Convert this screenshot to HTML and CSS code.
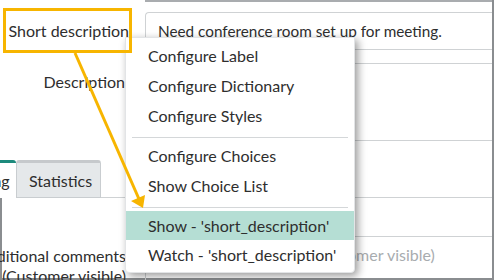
FILE: index.html
```html
<!DOCTYPE html>
<html lang="en">
<head>
    <meta charset="UTF-8">
    <title>Incident form - context menu</title>
    <link rel="stylesheet" href="styles.css">
</head>
<body>
    <div class="screen">
        <div class="form">
            <div class="form-row top-stub">
                <div class="label"></div>
                <div class="field stub"></div>
            </div>

            <div class="form-row row-short">
                <div class="label">Short description</div>
                <div class="field input">Need conference room set up for meeting.</div>
            </div>

            <div class="form-row row-desc">
                <div class="label">Description</div>
                <div class="field textarea"></div>
            </div>

            <div class="tabs">
                <div class="tab active">Billing</div>
                <div class="tab">Statistics</div>
                <div class="tab-fill"></div>
            </div>

            <div class="panel">
                <div class="form-row row-comments">
                    <div class="label label-stack">
                        <span>Additional comments</span>
                        <span>(Customer visible)</span>
                    </div>
                    <div class="field textarea placeholder">Additional comments (Customer visible)</div>
                </div>
            </div>
        </div>

        <ul class="context-menu">
            <li>Configure Label</li>
            <li>Configure Dictionary</li>
            <li>Configure Styles</li>
            <li class="sep"></li>
            <li>Configure Choices</li>
            <li>Show Choice List</li>
            <li class="sep"></li>
            <li class="hover">Show - 'short_description'</li>
            <li>Watch - 'short_description'</li>
        </ul>

        <svg class="callout" width="494" height="280" viewBox="0 0 494 280">
            <rect x="4.5" y="9.5" width="126" height="42" fill="none" stroke="#f7b500" stroke-width="3"/>
            <line x1="75" y1="53" x2="139" y2="199" stroke="#f7b500" stroke-width="3"/>
            <polygon points="143,208 131,201 145,195" fill="#f7b500"/>
        </svg>
    </div>
</body>
</html>
```

FILE: styles.css
```css
* {
    margin: 0;
    padding: 0;
    box-sizing: border-box;
}

body {
    font-family: Lato, 'Open Sans', sans-serif;
    color: #2e2e2e;
    background: #fff;
}

.screen {
    position: relative;
    width: 494px;
    height: 280px;
    overflow: hidden;
    border-right: 2px solid #8a8d90;
}

.form {
    display: flex;
    flex-direction: column;
}

.form-row {
    display: grid;
    grid-template-columns: 145px 1fr;
}

.label {
    font-size: 16px;
    text-align: right;
    padding-right: 20px;
    white-space: nowrap;
}

.field {
    border: 1px solid #cfd2d4;
    border-right: none;
}

.top-stub {
    height: 12px;
}

.stub {
    height: 2px;
    border: none;
    border-top: 2px solid #a9acaf;
}

.row-short {
    height: 38px;
}

.row-short .label {
    padding-right: 16px;
    padding-top: 9px;
}

.input {
    border-radius: 4px 0 0 4px;
    font-size: 15.3px;
    padding: 9px 12px;
    white-space: nowrap;
}

.row-desc {
    margin-top: 13px;
    height: 78px;
}

.row-desc .label {
    padding-top: 9px;
}

.textarea {
    border-radius: 4px 0 0 4px;
}

.tabs {
    margin-top: 19px;
    display: flex;
    height: 38px;
    margin-left: -45px;
}

.tab {
    font-size: 16px;
    padding: 8px 12px;
    background: #e5e8ea;
    border: 1px solid #c9cdd0;
    border-top: 3px solid #c6c9cc;
    border-radius: 3px 3px 0 0;
    width: 85px;
}

.tab.active {
    width: 61px;
    background: #fff;
    border: none;
    border-top: 3px solid #1d8a7c;
    text-align: right;
    padding-right: 10px;
}

.tab-fill {
    flex: 1;
    border-bottom: 1px solid #cfd2d4;
}

.panel {
    border-left: 2px solid #8a8d90;
    border-bottom: 2px solid #8a8d90;
    height: 82px;
    padding-top: 38px;
}

.row-comments {
    height: 60px;
    grid-template-columns: 143px 1fr;
}

.label-stack {
    display: flex;
    flex-direction: column;
    align-items: flex-end;
    line-height: 20px;
    padding-top: 10px;
    padding-right: 19px;
}

.placeholder {
    color: #a8acaf;
    font-size: 16px;
    padding: 8px 12px;
    white-space: nowrap;
}

.context-menu {
    position: absolute;
    left: 125px;
    top: 37px;
    width: 230px;
    height: 236px;
    list-style: none;
    background: #fff;
    border: 1px solid #e2e4e6;
    border-radius: 0 0 4px 4px;
    box-shadow: 3px 3px 8px rgba(0, 0, 0, 0.4);
    padding: 3px 0;
}

.context-menu li {
    font-size: 16px;
    height: 30px;
    line-height: 30px;
    padding-left: 22px;
    white-space: nowrap;
}

.context-menu li.sep {
    height: 1px;
    margin: 6px 6px 3px;
    background: #d4d7d9;
}

.context-menu li.hover {
    background: #b5ded4;
    height: 29px;
}

.callout {
    position: absolute;
    left: 0;
    top: 0;
    pointer-events: none;
}
```
